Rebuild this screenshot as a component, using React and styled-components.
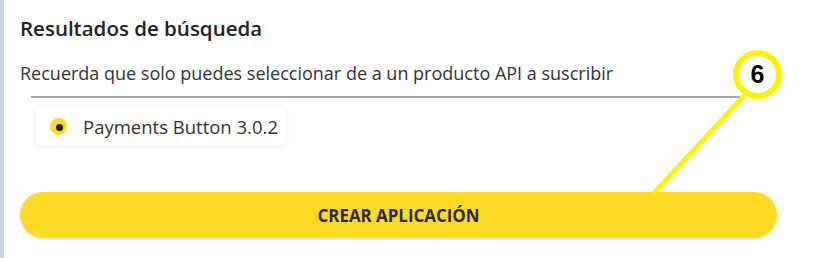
import React from "react";
import styled, { createGlobalStyle } from "styled-components";

const GlobalStyle = createGlobalStyle`
    html, body {
        margin: 0;
        padding: 0;
        background: #ffffff;
    }
    body {
        font-family: "Open Sans", "Liberation Sans", sans-serif;
    }
`;

const Page = styled.div`
    position: relative;
    width: 816px;
    height: 258px;
    box-sizing: border-box;
    border-left: 4px solid #c9d1e2;
    padding: 14px 39px 0 16px;
    background: #ffffff;
    overflow: hidden;
`;

const Title = styled.h2`
    margin: 0;
    font-size: 20.5px;
    font-weight: 600;
    color: #222222;
    line-height: 28px;
`;

const Hint = styled.p`
    margin: 19px 0 0;
    font-size: 18px;
    color: #333333;
    line-height: 24px;
`;

const Divider = styled.hr`
    margin: 11px 0 0 11px;
    width: 709px;
    border: none;
    border-top: 2px solid #a3a3a3;
`;

const ResultList = styled.div`
    display: flex;
    flex-direction: column;
    align-items: flex-start;
    margin: 9px 0 0 16px;
`;

const ResultItem = styled.label`
    display: flex;
    align-items: center;
    gap: 16px;
    height: 38px;
    box-sizing: border-box;
    padding: 0 7px 0 14px;
    background: #ffffff;
    box-shadow: 0 2px 8px rgba(0, 0, 0, 0.07);
    font-size: 18.5px;
    color: #333333;
`;

const Radio = styled.span`
    position: relative;
    width: 17px;
    height: 17px;
    border-radius: 50%;
    background: #fdd824;
    flex-shrink: 0;

    &::after {
        content: "";
        position: absolute;
        left: 6px;
        top: 6px;
        width: 7px;
        height: 7px;
        border-radius: 50%;
        background: #1c1c1c;
    }
`;

const Action = styled.button`
    display: flex;
    align-items: center;
    justify-content: center;
    width: 757px;
    height: 46px;
    margin-top: 47px;
    border: none;
    border-radius: 23px;
    background: #fdda24;
    box-shadow: 0 1px 3px rgba(0, 0, 0, 0.12);
    font-family: "Open Sans", "Liberation Sans", sans-serif;
    font-size: 16.9px;
    font-weight: 700;
    color: #2b2b2b;
    cursor: pointer;
`;

const Callout = styled.svg`
    position: absolute;
    left: 640px;
    top: 45px;
    pointer-events: none;
`;

export default function App() {
    return (
        <>
            <GlobalStyle />
            <Page>
                <Title>Resultados de búsqueda</Title>
                <Hint>Recuerda que solo puedes seleccionar de a un producto API a suscribir</Hint>
                <Divider />
                <ResultList>
                    <ResultItem>
                        <Radio />
                        Payments Button 3.0.2
                    </ResultItem>
                </ResultList>
                <Action>CREAR APLICACIÓN</Action>
                <Callout width="160" height="160" viewBox="0 0 160 160">
                    <line x1="99" y1="52" x2="11" y2="147" stroke="#fff200" strokeWidth="5" strokeLinecap="round" />
                    <circle cx="113.5" cy="29.5" r="21.5" fill="#ffffff" stroke="#fff200" strokeWidth="6" />
                    <text
                        x="113.5"
                        y="38"
                        textAnchor="middle"
                        fontFamily="Liberation Sans, Arial, sans-serif"
                        fontWeight="700"
                        fontSize="25"
                        fill="#000000"
                    >
                        6
                    </text>
                </Callout>
            </Page>
        </>
    );
}
